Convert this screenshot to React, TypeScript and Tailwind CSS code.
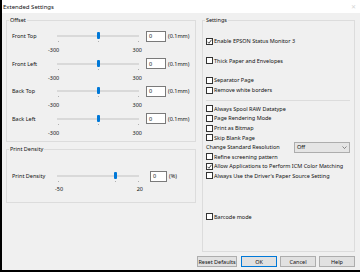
import React from 'react';

const font = { fontFamily: '"Segoe UI", "Noto Sans", "Liberation Sans", sans-serif' };

function Slider({ pos, ticks }: { pos: number; ticks: number[] }) {
  return (
    <div className="relative w-[82px] h-[12px]">
      <div className="absolute left-0 right-0 top-[5px] h-[2px] bg-[#e7e7e7] border-y border-[#d9d9d9]" />
      <div
        className="absolute top-[2px] w-[3px] h-[7px] bg-[#0078d7] rounded-[1px]"
        style={{ left: pos - 1 }}
      />
      {ticks.map((t) => (
        <div key={t} className="absolute top-[11px] w-[1px] h-[1px] bg-[#b0b0b0]" style={{ left: t }} />
      ))}
    </div>
  );
}

function OffsetRow({ label }: { label: string }) {
  return (
    <div>
      <div className="flex items-center h-[12px]">
        <div className="w-[50px] pl-[5px]">{label}</div>
        <Slider pos={41} ticks={[1, 41, 81]} />
        <div className="ml-[7px] w-[20px] h-[11px] bg-white border border-[#7a7a7a] flex items-center pl-[2px]">0</div>
        <div className="ml-[2px]">(0.1mm)</div>
      </div>
      <div className="h-[15.5px] pt-[5px] leading-[7px] flex">
        <div className="ml-[41px] w-[94px] flex justify-between">
          <span>-300</span>
          <span>300</span>
        </div>
      </div>
    </div>
  );
}

function Check({ label, checked }: { label: string; checked?: boolean }) {
  return (
    <div className="flex items-center h-[9.6px]">
      <div className="w-[7px] h-[7px] border border-[#333] bg-white flex items-center justify-center">
        {checked && (
          <svg width="5" height="5" viewBox="0 0 10 10">
            <path d="M1 5.5 L4 8.5 L9 1.5" fill="none" stroke="#222" strokeWidth="1.6" />
          </svg>
        )}
      </div>
      <span className="ml-[1px]">{label}</span>
    </div>
  );
}

function Btn({ label, primary, w }: { label: string; primary?: boolean; w: string }) {
  return (
    <div
      className={`${w} h-[11px] flex items-center justify-center bg-[#e1e1e1] border ${
        primary ? 'border-[#0078d7]' : 'border-[#adadad]'
      }`}
    >
      {label}
    </div>
  );
}

export default function App() {
  return (
    <div
      className="w-[360px] h-[272px] bg-[#f0f0f0] border-l-2 border-b-2 border-black flex flex-col overflow-hidden text-[5.5px] leading-[8px] text-[#111]"
      style={font}
    >
      <div className="h-[13px] bg-white flex items-center justify-between pl-[1px] pr-[4px] text-[6px]">
        <span>Extended Settings</span>
        <span className="text-[#d4d4d4] text-[6px]">✕</span>
      </div>
      <div className="flex-1 flex flex-col pl-[4px] pt-[3px]">
        <div className="flex">
          <div className="w-[190px] flex flex-col">
            <fieldset className="h-[126px] border border-[#dcdcdc] p-0 m-0">
              <legend className="ml-[2px] px-[1px] leading-[8px]">Offset</legend>
              <div className="mt-[6px]">
                <OffsetRow label="Front Top" />
                <OffsetRow label="Front Left" />
                <OffsetRow label="Back Top" />
                <OffsetRow label="Back Left" />
              </div>
            </fieldset>
            <fieldset className="mt-[3px] h-[58px] border border-[#dcdcdc] p-0 m-0">
              <legend className="ml-[2px] px-[1px] leading-[8px]">Print Density</legend>
              <div className="mt-[17px]">
                <div className="flex items-center h-[12px]">
                  <div className="w-[50px] pl-[5px]">Print Density</div>
                  <Slider pos={58} ticks={[1, 58, 81]} />
                  <div className="ml-[11px] w-[17px] h-[11px] bg-white border border-[#7a7a7a] flex items-center pl-[2px]">0</div>
                  <div className="ml-[2px]">(%)</div>
                </div>
                <div className="h-[15.5px] pt-[4px] leading-[7px] flex">
                  <div className="ml-[48px] w-[88px] flex justify-between">
                    <span>-50</span>
                    <span>20</span>
                  </div>
                </div>
              </div>
            </fieldset>
          </div>
          <fieldset className="ml-[6px] w-[153px] h-[236px] border border-[#dcdcdc] p-0 m-0">
            <legend className="ml-[2px] px-[1px] leading-[8px]">Settings</legend>
            <div className="pl-[3px]">
              <div className="mt-[12.7px]">
                <Check label="Enable EPSON Status Monitor 3" checked />
              </div>
              <div className="mt-[9.9px]">
                <Check label="Thick Paper and Envelopes" />
              </div>
              <div className="mt-[9.9px]">
                <Check label="Separator Page" />
                <Check label="Remove white borders" />
              </div>
              <div className="mt-[5px] mr-[4px] h-[1px] bg-[#dcdcdc]" />
              <div className="mt-[3.2px]">
                <Check label="Always Spool RAW Datatype" />
                <Check label="Page Rendering Mode" />
                <Check label="Print as Bitmap" />
                <Check label="Skip Blank Page" />
                <div className="flex items-center h-[9.6px]">
                  <span className="w-[88px]">Change Standard Resolution</span>
                  <div className="w-[56px] h-[11px] bg-[#e5e5e5] border border-[#adadad] flex items-center justify-between pl-[2px] pr-[2px]">
                    <span>Off</span>
                    <svg width="5" height="3" viewBox="0 0 10 6">
                      <path d="M1 1 L5 5 L9 1" fill="none" stroke="#444" strokeWidth="1.2" />
                    </svg>
                  </div>
                </div>
                <Check label="Refine screening pattern" />
                <Check label="Allow Applications to Perform ICM Color Matching" checked />
                <Check label="Always Use the Driver's Paper Source Setting" />
              </div>
              <div className="mt-[31.2px]">
                <Check label="Barcode mode" />
              </div>
            </div>
          </fieldset>
        </div>
        <div className="flex mt-[4px] ml-[191px]">
          <Btn label="Reset Defaults" w="w-[40px]" />
          <div className="ml-[4px]">
            <Btn label="OK" primary w="w-[36px]" />
          </div>
          <div className="ml-[3px]">
            <Btn label="Cancel" w="w-[36px]" />
          </div>
          <div className="ml-[3px]">
            <Btn label="Help" w="w-[36px]" />
          </div>
        </div>
      </div>
    </div>
  );
}
